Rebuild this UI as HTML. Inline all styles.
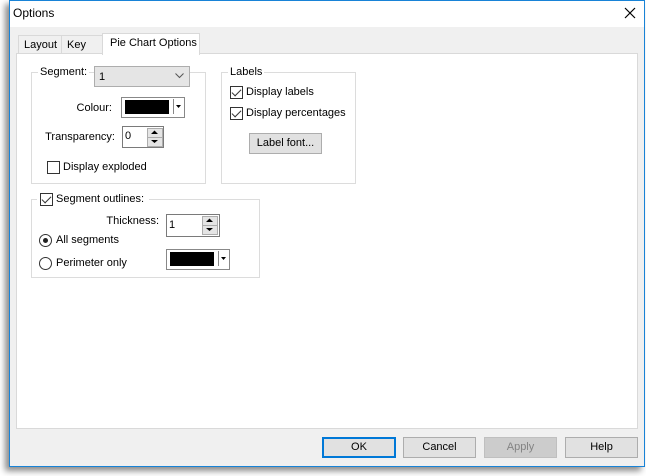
<!DOCTYPE html>
<html><head><style>
body{margin:0;width:646px;height:476px;background:#fff;position:relative;overflow:hidden;font-family:"Liberation Sans",sans-serif;font-size:11px;color:#000}
.a{position:absolute}
.win{left:9px;top:0;width:634px;height:465px;border:1px solid #1883d7;background:#f0f0f0;box-shadow:-4px 4px 6px rgba(0,0,0,.45)}
.cb{width:11px;height:11px;border:1px solid #333;background:#fff}
.rb{width:11px;height:11px;border:1px solid #333;border-radius:50%;background:#fff}
.btn{border:1px solid #adadad;background:#e1e1e1;text-align:center;line-height:19px;height:19px}
.grp{border:1px solid #dcdcdc}
.lbl{background:#fff;padding:0 2px}
.r{text-align:right}
.chk::after{content:"";position:absolute;left:3px;top:0px;width:4px;height:8px;border:solid #333;border-width:0 1px 1px 0;transform:rotate(45deg)}
</style></head><body>
<div class="a win"></div>
<div class="a" style="left:10px;top:1px;width:634px;height:26px;background:#fff"></div>
<div class="a" style="left:13px;top:6px;font-size:12px">Options</div>
<svg class="a" style="left:624px;top:7px" width="12" height="12"><path d="M1 1L11 11M11 1L1 11" stroke="#000" stroke-width="1.2"/></svg>
<!-- tabs -->
<div class="a" style="left:18px;top:35px;width:42px;height:18px;border:1px solid #d9d9d9;border-bottom:none;background:#f0f0f0"></div>
<div class="a" style="left:24px;top:39px">Layout</div>
<div class="a" style="left:61px;top:35px;width:40px;height:18px;border:1px solid #d9d9d9;border-bottom:none;background:#f0f0f0"></div>
<div class="a" style="left:67px;top:39px">Key</div>
<div class="a" style="left:16px;top:53px;width:620px;height:374px;border:1px solid #d9d9d9;background:#fff"></div>
<div class="a" style="left:102px;top:33px;width:96px;height:21px;border:1px solid #d9d9d9;border-bottom:none;background:#fff"></div>
<div class="a" style="left:110px;top:37px">Pie Chart Options</div>
<!-- Segment group -->
<div class="a grp" style="left:31px;top:72px;width:173px;height:110px"></div>
<div class="a lbl" style="left:38px;top:66px">Segment:</div>
<div class="a" style="left:94px;top:66px;width:94px;height:19px;border:1px solid #adadad;background:#e5e5e5"></div>
<div class="a" style="left:99px;top:71px">1</div>
<svg class="a" style="left:175px;top:73px" width="9" height="6"><path d="M0.5 0.5L4.5 4.5L8.5 0.5" fill="none" stroke="#555"/></svg>
<div class="a r" style="left:40px;top:102px;width:72px">Colour:</div>
<div class="a" style="left:121px;top:97px;width:62px;height:19px;border:1px solid #888;background:#fff"></div>
<div class="a" style="left:125px;top:100px;width:44px;height:14px;background:#000"></div>
<div class="a" style="left:173px;top:99px;width:1px;height:15px;background:#888"></div>
<svg class="a" style="left:176px;top:105px" width="5" height="3"><path d="M0 0H5L2.5 3Z"/></svg>
<div class="a r" style="left:40px;top:131px;width:75px">Transparency:</div>
<div class="a" style="left:122px;top:126px;width:40px;height:20px;border:1px solid #7a7a7a;background:#fff"></div>
<div class="a" style="left:125px;top:130px">0</div>
<div class="a" style="left:147px;top:128px;width:14px;height:8px;border:1px solid #adadad;background:#e5e5e5"></div>
<div class="a" style="left:147px;top:137px;width:14px;height:8px;border:1px solid #adadad;background:#e5e5e5"></div>
<svg class="a" style="left:151px;top:130px" width="7" height="13"><path d="M0 4H7L3.5 0.5Z M0 10H7L3.5 13Z"/></svg>
<div class="a cb" style="left:47px;top:161px"></div>
<div class="a" style="left:63px;top:161px">Display exploded</div>
<!-- Labels -->
<div class="a grp" style="left:221px;top:72px;width:133px;height:110px"></div>
<div class="a lbl" style="left:228px;top:66px">Labels</div>
<div class="a cb chk" style="left:230px;top:86px"></div>
<div class="a" style="left:246px;top:86px">Display labels</div>
<div class="a cb chk" style="left:230px;top:107px"></div>
<div class="a" style="left:246px;top:107px">Display percentages</div>
<div class="a btn" style="left:249px;top:133px;width:71px">Label font...</div>
<!-- Segment outlines -->
<div class="a grp" style="left:31px;top:199px;width:227px;height:77px"></div>
<div class="a lbl" style="left:37px;top:192px;width:108px;height:14px"></div>
<div class="a cb chk" style="left:40px;top:193px"></div>
<div class="a" style="left:56px;top:193px">Segment outlines:</div>
<div class="a r" style="left:80px;top:215px;width:79px">Thickness:</div>
<div class="a" style="left:166px;top:214px;width:52px;height:21px;border:1px solid #7a7a7a;background:#fff"></div>
<div class="a" style="left:169px;top:219px">1</div>
<div class="a" style="left:202px;top:216px;width:14px;height:8px;border:1px solid #adadad;background:#e5e5e5"></div>
<div class="a" style="left:202px;top:225px;width:14px;height:8px;border:1px solid #adadad;background:#e5e5e5"></div>
<svg class="a" style="left:206px;top:218px" width="7" height="13"><path d="M0 4H7L3.5 0.5Z M0 10H7L3.5 13Z"/></svg>
<div class="a rb" style="left:39px;top:234px"></div>
<div class="a" style="left:43px;top:238px;width:5px;height:5px;border-radius:50%;background:#222"></div>
<div class="a" style="left:56px;top:234px">All segments</div>
<div class="a rb" style="left:39px;top:257px"></div>
<div class="a" style="left:56px;top:257px">Perimeter only</div>
<div class="a" style="left:166px;top:249px;width:62px;height:19px;border:1px solid #888;background:#fff"></div>
<div class="a" style="left:170px;top:252px;width:44px;height:14px;background:#000"></div>
<div class="a" style="left:218px;top:251px;width:1px;height:15px;background:#888"></div>
<svg class="a" style="left:221px;top:257px" width="5" height="3"><path d="M0 0H5L2.5 3Z"/></svg>
<!-- buttons -->
<div class="a btn" style="left:322px;top:437px;width:70px;border:2px solid #0078d7;height:17px;line-height:17px">OK</div>
<div class="a btn" style="left:403px;top:437px;width:71px">Cancel</div>
<div class="a btn" style="left:484px;top:437px;width:71px;border-color:#bfbfbf;background:#ccc;color:#838383">Apply</div>
<div class="a btn" style="left:565px;top:437px;width:71px">Help</div>
</body></html>
